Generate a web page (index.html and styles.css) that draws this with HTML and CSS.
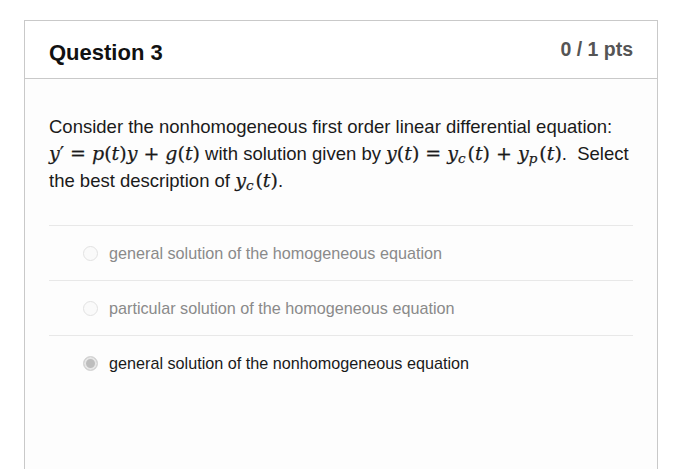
FILE: index.html
```html
<!DOCTYPE html>
<html>
<head>
<meta charset="utf-8">
<link rel="stylesheet" href="styles.css">
</head>
<body>
<div class="card">
  <div class="header">
    <h2 class="title">Question 3</h2>
    <div class="pts">0 / 1 pts</div>
  </div>
  <div class="content">
    <p class="question">Consider the nonhomogeneous first order linear differential equation:<br><span class="m"><i>y</i>′<span class="op">=</span><i>p</i><span class="r">(</span><i>t</i><span class="r">)</span><i>y</i><span class="op">+</span><i>g</i><span class="r">(</span><i>t</i><span class="r">)</span></span> with solution given by <span class="m"><i>y</i><span class="r">(</span><i>t</i><span class="r">)</span><span class="op">=</span><i>y</i><sub><i>c</i></sub><span class="r">(</span><i>t</i><span class="r">)</span><span class="op">+</span><i>y</i><sub><i>p</i></sub><span class="r">(</span><i>t</i><span class="r">)</span></span>.&nbsp; Select<br>the best description of <span class="m"><i>y</i><sub><i>c</i></sub><span class="r">(</span><i>t</i><span class="r">)</span></span>.</p>
    <div class="answers">
      <div class="answer"><span class="radio"></span><span class="label">general solution of the homogeneous equation</span></div>
      <div class="answer"><span class="radio"></span><span class="label">particular solution of the homogeneous equation</span></div>
      <div class="answer selected"><span class="radio"></span><span class="label">general solution of the nonhomogeneous equation</span></div>
    </div>
  </div>
</div>
</body>
</html>
```
FILE: styles.css
```css
html, body {
  margin: 0;
  padding: 0;
  background: #ffffff;
}
body {
  padding: 20px 0 0 24px;
  font-family: "Liberation Sans", Arial, sans-serif;
  color: #1a1a1a;
}
.card {
  width: 632px;
  height: 460px;
  border: 1px solid #c9c9c9;
  border-bottom: none;
  background: #fdfdfd;
}
.header {
  height: 57px;
  border-bottom: 1px solid #c9c9c9;
  background: #ffffff;
  display: flex;
  justify-content: space-between;
  align-items: flex-start;
  padding: 0 24px;
}
.title {
  margin: 0;
  padding-top: 19px;
  font-size: 22px;
  line-height: 26px;
  font-weight: bold;
  color: #111;
}
.pts {
  padding-top: 16px;
  font-size: 19.5px;
  line-height: 24px;
  font-weight: bold;
  color: #555;
}
.content {
  padding: 34px 24px 0 24px;
}
.question {
  margin: 0;
  font-size: 18.5px;
  line-height: 27px;
  color: #1a1a1a;
}
.m {
  font-family: "DejaVu Serif", "Liberation Serif", serif;
  font-size: 19px;
  line-height: 20px;
  white-space: nowrap;
  -webkit-text-stroke: 0.25px #1a1a1a;
}
.m i {
  font-style: italic;
}
.m .r {
  font-style: normal;
}
.m .op {
  padding: 0 6px;
  font-style: normal;
}
.m sub {
  font-size: 13.5px;
  vertical-align: -3px;
  line-height: 0;
  margin-right: 2px;
}
.answers {
  margin-top: 31px;
}
.answer {
  height: 54px;
  border-top: 1px solid #e8e8e8;
  display: flex;
  align-items: center;
  padding-left: 34px;
  gap: 11px;
}
.radio {
  width: 13px;
  height: 13px;
  border-radius: 50%;
  border: 1px solid #e2e2e2;
  background: #fafafa;
  box-sizing: content-box;
}
.selected .radio {
  background: #bdbdbd;
  box-shadow: inset 0 0 0 2px #e6e6e6;
  border-color: #d6d6d6;
}
.label {
  font-size: 16.2px;
  color: #8a8a8a;
}
.selected .label {
  color: #1a1a1a;
}
```
